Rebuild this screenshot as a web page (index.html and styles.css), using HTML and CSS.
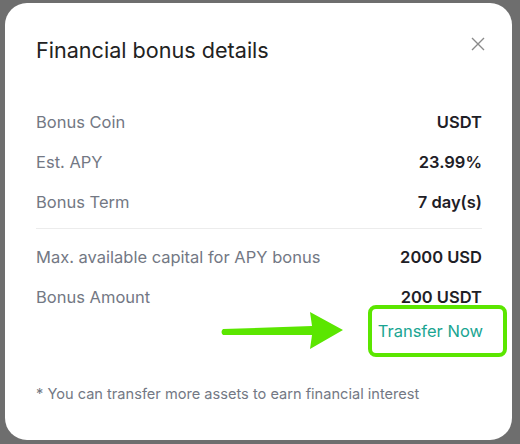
FILE: index.html
```html
<!DOCTYPE html>
<html lang="en">
<head>
  <meta charset="UTF-8">
  <meta name="viewport" content="width=device-width, initial-scale=1.0">
  <title>Financial bonus details</title>
  <link rel="stylesheet" href="styles.css">
</head>
<body>

<div class="backdrop">
  <div class="modal">
    <div class="modal-header">
      <h2>Financial bonus details</h2>
      <span class="close">
        <svg width="14" height="14" viewBox="0 0 14 14"><path d="M1 1 L13 13 M13 1 L1 13" stroke="#8a8a8a" stroke-width="1.4" fill="none"/></svg>
      </span>
    </div>

    <!-- Bonus info -->
    <div class="rows">
      <div class="row"><span class="label">Bonus Coin</span><span class="value">USDT</span></div>
      <div class="row"><span class="label">Est. APY</span><span class="value">23.99%</span></div>
      <div class="row"><span class="label">Bonus Term</span><span class="value">7 day(s)</span></div>
    </div>

    <div class="divider"></div>

    <div class="rows">
      <div class="row"><span class="label">Max. available capital for APY bonus</span><span class="value">2000 USD</span></div>
      <div class="row"><span class="label">Bonus Amount</span><span class="value">200 USDT</span></div>
    </div>

    <div class="action">
      <svg class="arrow" width="124" height="40" viewBox="0 0 124 40">
        <path d="M3 18 L92 15 L90 1 L123 19 L90 38 L92 24 L3 24 Q0 21 3 18 Z" fill="#5be600"/>
      </svg>
      <a href="#" class="transfer">Transfer Now</a>
    </div>

    <p class="note">* You can transfer more assets to earn financial interest</p>
  </div>
</div>

</body>
</html>
```

FILE: styles.css
```css
body {
  margin: 0;
  font-family: Inter, "Noto Sans", sans-serif;
  background-color: #6e6e6e;
  width: 520px;
  height: 444px;
  overflow: hidden;
}

.backdrop {
  padding: 3px 8px 0 5px;
}

.modal {
  background-color: white;
  border-radius: 22px;
  height: 437px;
  box-sizing: border-box;
  padding: 0 30px 0 31px;
}

.modal-header {
  display: flex;
  justify-content: space-between;
  align-items: center;
  height: 99px;
}

.modal-header h2 {
  margin: 0;
  font-size: 21.6px;
  font-weight: 400;
  color: #222;
  margin-top: -5px;
}

.close {
  display: flex;
  margin-right: -3px;
  margin-top: -17px;
}

.rows {
  display: flex;
  flex-direction: column;
}

.row {
  display: flex;
  justify-content: space-between;
  align-items: center;
  height: 40px;
  font-size: 16.5px;
}

.label {
  color: #737884;
}

.value {
  color: #1e2026;
  font-weight: 600;
}

.divider {
  height: 1px;
  background-color: #ececec;
  margin: 6px 0 8px;
}

.action {
  display: flex;
  justify-content: flex-end;
  align-items: center;
  gap: 24px;
  margin-right: -25px;
  margin-top: -12px;
}

.arrow {
  display: block;
}

.transfer {
  display: block;
  border: 4px solid #5be600;
  border-radius: 8px;
  padding: 12px 20px 12px 6px;
  color: #1aa592;
  text-decoration: none;
  font-size: 16.5px;
}

.note {
  margin: 28px 0 0;
  font-size: 14.6px;
  color: #737884;
}
```
